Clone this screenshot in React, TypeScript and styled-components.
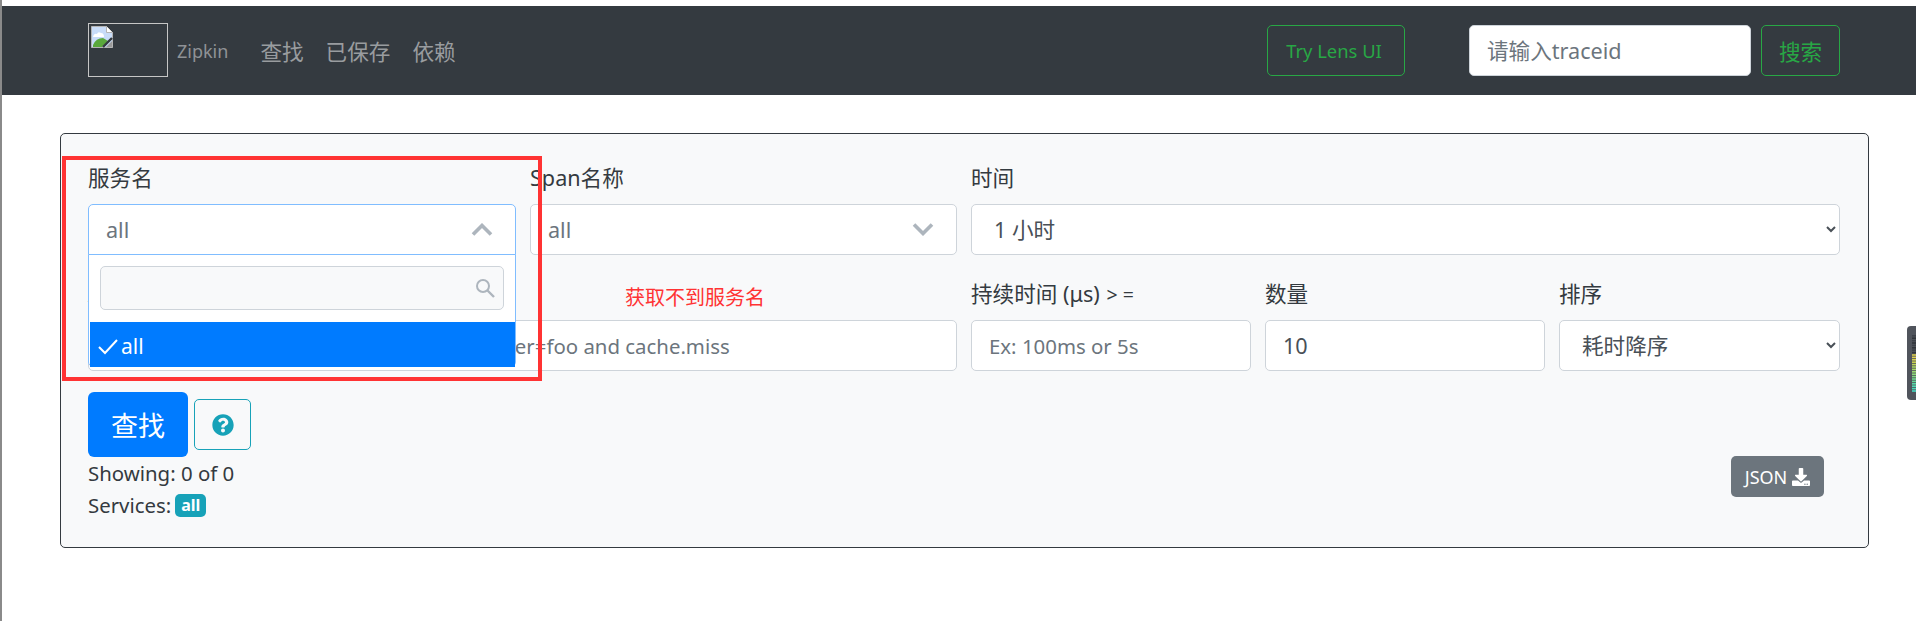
import React from 'react';
import styled, { createGlobalStyle } from 'styled-components';
import { FaDownload, FaQuestionCircle } from 'react-icons/fa';

const FONT = '"Noto Sans", "Noto Sans CJK SC", sans-serif';

const GlobalStyle = createGlobalStyle`
  html, body {
    margin: 0;
    background: #fff;
    overflow: hidden;
  }
  body {
    font-family: ${FONT};
    font-size: 21.6px;
    color: #212529;
  }
`;

const Page = styled.div`
  position: relative;
  height: 621px;
  box-sizing: border-box;
  padding-top: 6px;
  border-left: 2px solid #8a8a8a;
`;

const Navbar = styled.nav`
  display: flex;
  align-items: center;
  height: 89px;
  padding: 0 76px 0 86px;
  background: #343a40;
`;

const Logo = styled.div`
  width: 80px;
  height: 54px;
  box-sizing: border-box;
  border: 1px solid #c6c6c6;
  margin-top: -1px;
  padding: 1px 0 0 2px;
`;

const Brand = styled.span`
  margin: 1px 32px 0 9px;
  font-size: 18px;
  color: #8f9296;
`;

const NavLink = styled.a`
  margin-right: 22px;
  font-size: 21.6px;
  color: #999c9f;
`;

const Spacer = styled.div`
  flex: 1;
`;

const OutlineButton = styled.button<{ wide?: boolean }>`
  height: 51px;
  box-sizing: border-box;
  width: ${props => (props.wide ? '138px' : '79px')};
  margin-left: ${props => (props.wide ? '0' : '10px')};
  border: 1px solid #28a745;
  border-radius: 5px;
  background: transparent;
  color: #28a745;
  font-family: ${FONT};
  font-size: ${props => (props.wide ? '18.4px' : '21.6px')};
  padding: ${props => (props.wide ? '0 4px 0 0' : '0')};
`;

const TraceInput = styled.input`
  width: 282px;
  height: 51px;
  box-sizing: border-box;
  margin-left: 64px;
  padding: 0 17px;
  border: 1px solid #ced4da;
  border-radius: 5px;
  background: #fff;
  font-family: ${FONT};
  font-size: 21.6px;

  &::placeholder {
    color: #6c757d;
    opacity: 1;
  }
`;

const Card = styled.section`
  position: relative;
  width: 1809px;
  height: 415px;
  box-sizing: border-box;
  margin: 38px 0 0 58px;
  padding: 30px 28px 0 27px;
  border: 1px solid #343a40;
  border-radius: 5px;
  background: #f8f9fa;
`;

const Row = styled.div`
  display: flex;
  gap: 14px;
  margin-bottom: 25px;
`;

const Field = styled.div<{ width?: number }>`
  position: relative;
  flex: ${props => (props.width ? `0 0 ${props.width}px` : '1')};
  min-width: 0;
`;

const Label = styled.label`
  display: block;
  height: 28px;
  margin-bottom: 12px;
  line-height: 28px;
  font-size: 21.6px;
  color: #343a40;
  white-space: nowrap;
`;

const MathSign = styled.span`
  margin-left: 1px;
  font-size: 19.5px;
`;

const TextInput = styled.input`
  display: block;
  width: 100%;
  height: 51px;
  box-sizing: border-box;
  padding: 0 17px;
  border: 1px solid #ced4da;
  border-radius: 5px;
  background: #fff;
  color: #495057;
  font-family: ${FONT};
  font-size: 21.6px;

  &::placeholder {
    color: #6c757d;
    opacity: 1;
    font-size: 20.4px;
  }
`;

const NativeSelect = styled.select`
  display: block;
  width: 100%;
  height: 51px;
  box-sizing: border-box;
  padding: 0 12px 0 18px;
  border: 1px solid #ced4da;
  border-radius: 5px;
  background: #fff;
  color: #495057;
  font-family: ${FONT};
  font-size: 21.6px;
`;

const Combo = styled.div<{ open?: boolean }>`
  display: flex;
  align-items: center;
  justify-content: space-between;
  height: 51px;
  box-sizing: border-box;
  padding: 0 22px 0 17px;
  border: 1px solid ${props => (props.open ? '#80bdff' : '#ced4da')};
  border-radius: ${props => (props.open ? '5px 5px 0 0' : '5px')};
  background: #fff;
  color: #6c757d;
`;

const Dropdown = styled.div`
  position: absolute;
  top: 90px;
  left: 0;
  right: 0;
  z-index: 2;
  height: 113px;
  box-sizing: border-box;
  padding: 11px 0 0 1px;
  border: 1px solid #80bdff;
  border-radius: 0 0 5px 5px;
  background: #fff;
`;

const DropdownSearch = styled.div`
  display: flex;
  align-items: center;
  justify-content: flex-end;
  height: 44px;
  box-sizing: border-box;
  margin: 0 11px 12px 10px;
  padding-right: 8px;
  border: 1px solid #ced4da;
  border-radius: 5px;
  background: #f8f9fa;
`;

const Option = styled.div`
  display: flex;
  align-items: center;
  gap: 3px;
  height: 45px;
  box-sizing: border-box;
  padding: 3px 0 0 8px;
  background: #007bff;
  color: #fff;
  font-size: 21px;
`;

const Footer = styled.div`
  display: flex;
  justify-content: space-between;
  margin-top: -4px;
`;

const Buttons = styled.div`
  display: flex;
  align-items: center;
  gap: 6px;
`;

const SearchButton = styled.button`
  width: 100px;
  height: 65px;
  padding: 0;
  border: 0;
  border-radius: 6px;
  background: #007bff;
  color: #fff;
  font-family: ${FONT};
  font-size: 27px;
`;

const HelpButton = styled.button`
  display: flex;
  align-items: center;
  justify-content: center;
  width: 57px;
  height: 51px;
  padding: 0;
  border: 1px solid #17a2b8;
  border-radius: 5px;
  background: transparent;
  color: #17a2b8;
  font-size: 22px;
`;

const Stat = styled.div`
  display: flex;
  align-items: center;
  gap: 4px;
  height: 32px;
  font-size: 20.4px;
  color: #343a40;
`;

const Badge = styled.span`
  padding: 1px 6px 2px;
  line-height: 20px;
  border-radius: 5px;
  background: #17a2b8;
  color: #fff;
  font-size: 16px;
  font-weight: 700;
`;

const JsonButton = styled.button`
  display: flex;
  align-items: center;
  justify-content: center;
  gap: 5px;
  width: 93px;
  height: 41px;
  margin: 64px 16px 0 0;
  padding: 0;
  border: 0;
  border-radius: 5px;
  background: #6c757d;
  color: #fff;
  font-family: ${FONT};
  font-size: 18px;
`;

const Highlight = styled.div`
  position: absolute;
  top: 22px;
  left: 1px;
  z-index: 3;
  width: 480px;
  height: 225px;
  box-sizing: border-box;
  border: 4px solid #ff3333;
  pointer-events: none;
`;

const Note = styled.span`
  position: absolute;
  top: 150px;
  left: 564px;
  z-index: 3;
  font-size: 20px;
  line-height: 28px;
  color: #ff3333;
  white-space: nowrap;
`;

const SideWidget = styled.div`
  position: absolute;
  top: 326px;
  right: 0;
  width: 9px;
  height: 74px;
  border-radius: 4px 0 0 4px;
  background: #50545c;
  overflow: hidden;
`;

// the broken image placeholder chrome draws for a failed logo
const BrokenImage = () => (
  <svg width="22" height="22" viewBox="0 0 22 22">
    <path d="M.5.5h15l6 6v15H.5z" fill="#c8dcf8" stroke="#b4b4b4" />
    <path d="M15.5.5v6h6" fill="#fff" stroke="#b4b4b4" />
    <path d="M2 11q1-4 4-3q1-3 4-1q3 0 3 4z" fill="#fff" />
    <path d="M2 21v-2q3-7 10-7l5 3-6 6z" fill="#5aa83c" />
    <path d="M12 21l9-9" stroke="#343a40" strokeWidth="2.4" />
    <path d="M15 21l6-6v6z" fill="#9a9a9a" />
  </svg>
);

const Chevron = ({ up }: { up?: boolean }) => (
  <svg width="22" height="13" viewBox="0 0 22 13">
    <path
      d={up ? 'M2 11.5L11 2.5l9 9' : 'M2 1.5l9 9 9-9'}
      fill="none"
      stroke="#adb5bd"
      strokeWidth="3.6"
    />
  </svg>
);

const MagnifierIcon = () => (
  <svg width="20" height="20" viewBox="0 0 20 20">
    <circle cx="8" cy="8" r="6" fill="none" stroke="#adb5bd" strokeWidth="2" />
    <path d="M12.5 12.5L19 19" stroke="#adb5bd" strokeWidth="2.4" />
  </svg>
);

const CheckIcon = () => (
  <svg width="20" height="17" viewBox="0 0 20 17">
    <path d="M1 9l6 6L19 2" fill="none" stroke="#fff" strokeWidth="2" />
  </svg>
);

const stripeColors = [
  '#3c4048', '#30343a', '#3c4048', '#30343a', '#3c4048', '#30343a', '#3c4048', '#30343a',
  '#d8c94a', '#e0d050', '#d4d04e', '#c8d050', '#bcd45a', '#a8d060', '#a8d868', '#98d870',
  '#8cd878', '#80d880', '#70d890', '#64d898', '#58d8a8', '#50d8b0', '#48d8b8', '#44d8c0',
];

const Stripes = () => (
  <svg width="9" height="74" viewBox="0 0 9 74">
    {stripeColors.map((color, i) => (
      <rect key={i} x="5" y={9 + i * 2.4} width="4" height="1.6" fill={color} />
    ))}
  </svg>
);

const App: React.FC = () => (
  <Page>
    <GlobalStyle />
    <Navbar>
      <Logo>
        <BrokenImage />
      </Logo>
      <Brand>Zipkin</Brand>
      <NavLink>查找</NavLink>
      <NavLink>已保存</NavLink>
      <NavLink>依赖</NavLink>
      <Spacer />
      <OutlineButton wide>Try Lens UI</OutlineButton>
      <TraceInput placeholder="请输入traceid" />
      <OutlineButton>搜索</OutlineButton>
    </Navbar>

    <Card>
      <Row>
        <Field width={428}>
          <Label>服务名</Label>
          <Combo open>
            all
            <Chevron up />
          </Combo>
          <Dropdown>
            <DropdownSearch>
              <MagnifierIcon />
            </DropdownSearch>
            <Option>
              <CheckIcon />
              all
            </Option>
          </Dropdown>
        </Field>
        <Field width={427}>
          <Label>Span名称</Label>
          <Combo>
            all
            <Chevron />
          </Combo>
        </Field>
        <Field>
          <Label>时间</Label>
          <NativeSelect defaultValue="1h">
            <option value="1h">1 小时</option>
          </NativeSelect>
        </Field>
      </Row>
      <Row>
        <Field>
          <Label>Annotations Query</Label>
          <TextInput placeholder="For example: http.path=/foo/bar/ and cluster=foo and cache.miss" />
        </Field>
        <Field width={280}>
          <Label>
            持续时间 (μs) <MathSign>&gt; =</MathSign>
          </Label>
          <TextInput placeholder="Ex: 100ms or 5s" />
        </Field>
        <Field width={280}>
          <Label>数量</Label>
          <TextInput defaultValue="10" />
        </Field>
        <Field width={281}>
          <Label>排序</Label>
          <NativeSelect defaultValue="duration">
            <option value="duration">耗时降序</option>
          </NativeSelect>
        </Field>
      </Row>
      <Footer>
        <div>
          <Buttons>
            <SearchButton>查找</SearchButton>
            <HelpButton>
              <FaQuestionCircle />
            </HelpButton>
          </Buttons>
          <Stat>Showing: 0 of 0</Stat>
          <Stat>
            Services: <Badge>all</Badge>
          </Stat>
        </div>
        <JsonButton>
          JSON <FaDownload size={18} />
        </JsonButton>
      </Footer>
      <Highlight />
      <Note>获取不到服务名</Note>
    </Card>

    <SideWidget>
      <Stripes />
    </SideWidget>
  </Page>
);

export default App;
